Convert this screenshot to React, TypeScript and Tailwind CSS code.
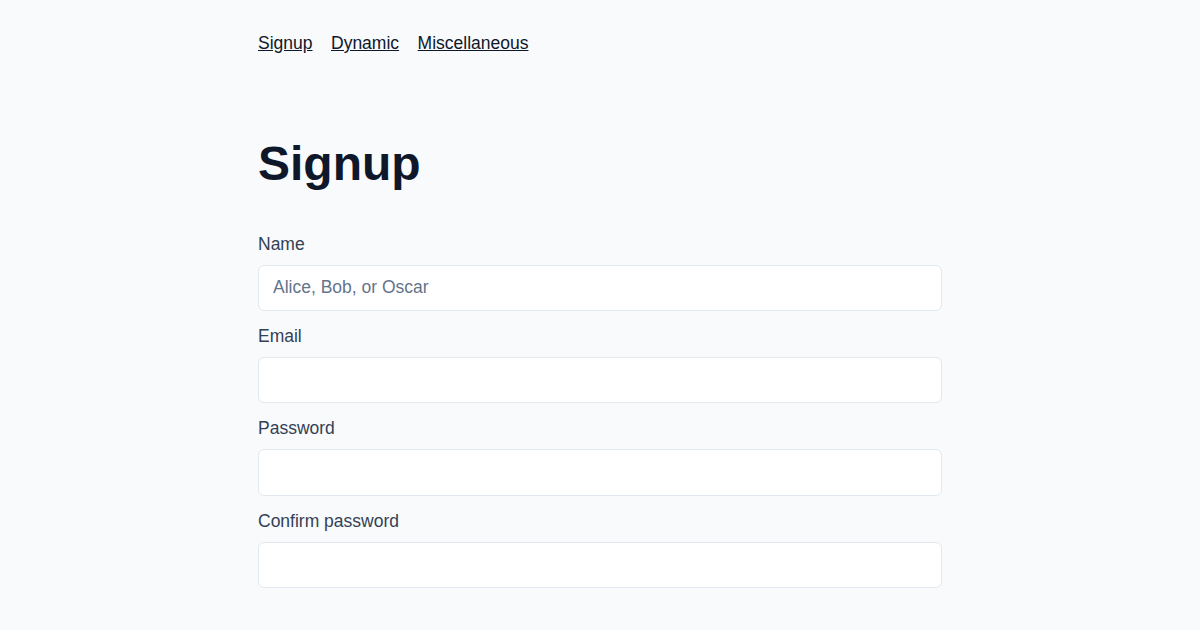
const FIELDS = [
  { label: 'Name', type: 'text', placeholder: 'Alice, Bob, or Oscar' },
  { label: 'Email', type: 'email', placeholder: '' },
  { label: 'Password', type: 'password', placeholder: '' },
  { label: 'Confirm password', type: 'password', placeholder: '' },
];

export default function App() {
  return (
    <div className="min-h-screen bg-[#f8fafc] font-['Liberation_Sans',Arial,sans-serif] text-[#0f172a]">
      <div className="mx-auto w-[684px] pt-[30px]">
        {/* Nav */}
        <nav className="flex gap-[18.5px] text-[17.5px] leading-[27px]">
          <a href="#" className="underline text-[#0f172a]">Signup</a>
          <a href="#" className="underline text-[#0f172a]">Dynamic</a>
          <a href="#" className="underline text-[#0f172a]">Miscellaneous</a>
        </nav>

        <h1 className="mt-[78px] text-[48px] leading-[57.6px] font-bold">Signup</h1>

        {/* Form */}
        <form className="mt-[38px] flex flex-col">
          {FIELDS.map((f) => (
            <div key={f.label} className="flex flex-col mb-[11.83px]">
              <label className="text-[17.5px] leading-[26px] text-[#334155]">{f.label}</label>
              <input
                type={f.type}
                placeholder={f.placeholder}
                className="mt-[8px] h-[46.5px] w-full rounded-[6px] border border-[#e2e8f0] bg-white px-[14px] text-[17.5px] text-[#0f172a] placeholder:text-[#64748b] outline-none"
              />
            </div>
          ))}
        </form>
      </div>
    </div>
  );
}
